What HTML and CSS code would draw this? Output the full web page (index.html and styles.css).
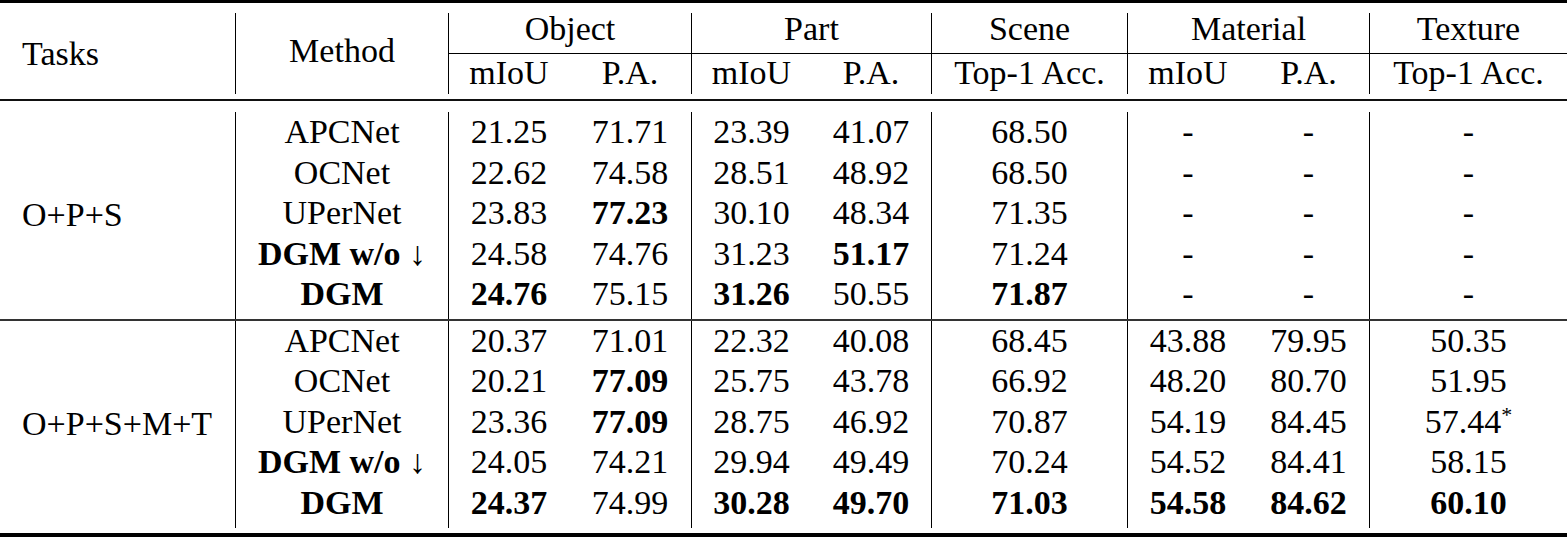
FILE: index.html
```html
<!DOCTYPE html>
<html>
<head>
<meta charset="utf-8">
<link rel="stylesheet" href="styles.css">
</head>
<body>
<table class="res">
<colgroup>
<col class="w-tasks"><col class="w-method">
<col class="w-o1"><col class="w-o2">
<col class="w-p1"><col class="w-p2">
<col class="w-scene">
<col class="w-m1"><col class="w-m2">
<col class="w-tex">
</colgroup>
<tbody>
<tr class="rule heavy"><td colspan="10"></td></tr>
<tr class="gap g-top"><td colspan="10"></td></tr>
<tr class="hd1">
<td rowspan="2" class="tasks hdspan">Tasks</td>
<td rowspan="2" class="vl hdspan">Method</td>
<td colspan="2" class="vl cm">Object</td>
<td colspan="2" class="vl cm">Part</td>
<td class="vl cm">Scene</td>
<td colspan="2" class="vl cm">Material</td>
<td class="vl cm">Texture</td>
</tr>
<tr class="hd2">
<td class="vl">mIoU</td><td>P.A.</td>
<td class="vl">mIoU</td><td>P.A.</td>
<td class="vl">Top-1 Acc.</td>
<td class="vl">mIoU</td><td>P.A.</td>
<td class="vl">Top-1 Acc.</td>
</tr>
<tr class="gap g-above"><td colspan="10"></td></tr>
<tr class="rule light"><td colspan="10"></td></tr>
<tr class="gap g-below"><td colspan="10"></td></tr>

<tr class="row first">
<td rowspan="5" class="tasks">O+P+S</td>
<td class="vl">APCNet</td>
<td class="vl">21.25</td><td>71.71</td>
<td class="vl">23.39</td><td>41.07</td>
<td class="vl">68.50</td>
<td class="vl">-</td><td>-</td>
<td class="vl">-</td>
</tr>
<tr class="row">
<td class="vl">OCNet</td>
<td class="vl">22.62</td><td>74.58</td>
<td class="vl">28.51</td><td>48.92</td>
<td class="vl">68.50</td>
<td class="vl">-</td><td>-</td>
<td class="vl">-</td>
</tr>
<tr class="row">
<td class="vl">UPerNet</td>
<td class="vl">23.83</td><td><b>77.23</b></td>
<td class="vl">30.10</td><td>48.34</td>
<td class="vl">71.35</td>
<td class="vl">-</td><td>-</td>
<td class="vl">-</td>
</tr>
<tr class="row">
<td class="vl"><b>DGM w/o</b> <span class="arrow">↓</span></td>
<td class="vl">24.58</td><td>74.76</td>
<td class="vl">31.23</td><td><b>51.17</b></td>
<td class="vl">71.24</td>
<td class="vl">-</td><td>-</td>
<td class="vl">-</td>
</tr>
<tr class="row last">
<td class="vl"><b>DGM</b></td>
<td class="vl"><b>24.76</b></td><td>75.15</td>
<td class="vl"><b>31.26</b></td><td>50.55</td>
<td class="vl"><b>71.87</b></td>
<td class="vl">-</td><td>-</td>
<td class="vl">-</td>
</tr>

<tr class="rule mid"><td colspan="10"></td></tr>

<tr class="row first">
<td rowspan="5" class="tasks">O+P+S+M+T</td>
<td class="vl">APCNet</td>
<td class="vl">20.37</td><td>71.01</td>
<td class="vl">22.32</td><td>40.08</td>
<td class="vl">68.45</td>
<td class="vl">43.88</td><td>79.95</td>
<td class="vl">50.35</td>
</tr>
<tr class="row">
<td class="vl">OCNet</td>
<td class="vl">20.21</td><td><b>77.09</b></td>
<td class="vl">25.75</td><td>43.78</td>
<td class="vl">66.92</td>
<td class="vl">48.20</td><td>80.70</td>
<td class="vl">51.95</td>
</tr>
<tr class="row">
<td class="vl">UPerNet</td>
<td class="vl">23.36</td><td><b>77.09</b></td>
<td class="vl">28.75</td><td>46.92</td>
<td class="vl">70.87</td>
<td class="vl">54.19</td><td>84.45</td>
<td class="vl">57.44<sup class="star">*</sup></td>
</tr>
<tr class="row">
<td class="vl"><b>DGM w/o</b> <span class="arrow">↓</span></td>
<td class="vl">24.05</td><td>74.21</td>
<td class="vl">29.94</td><td>49.49</td>
<td class="vl">70.24</td>
<td class="vl">54.52</td><td>84.41</td>
<td class="vl">58.15</td>
</tr>
<tr class="row last2">
<td class="vl"><b>DGM</b></td>
<td class="vl"><b>24.37</b></td><td>74.99</td>
<td class="vl"><b>30.28</b></td><td><b>49.70</b></td>
<td class="vl"><b>71.03</b></td>
<td class="vl"><b>54.58</b></td><td><b>84.62</b></td>
<td class="vl"><b>60.10</b></td>
</tr>
<tr class="gap g-above"><td colspan="10"></td></tr>
<tr class="rule heavy bottom"><td colspan="10"></td></tr>
</tbody>
</table>
</body>
</html>
```

FILE: styles.css
```css
html, body {
  margin: 0;
  padding: 0;
  background: #fff;
  font-family: "Liberation Serif", serif;
}

.res {
  width: 1567px;
  table-layout: fixed;
  border-collapse: separate;
  border-spacing: 0;
  font-family: "Liberation Serif", serif;
  font-size: 34px;
  color: #000;
}

.w-tasks { width: 235px; }
.w-method { width: 213px; }
.w-o1 { width: 121px; }
.w-o2 { width: 122px; }
.w-p1 { width: 120px; }
.w-p2 { width: 120px; }
.w-scene { width: 196px; }
.w-m1 { width: 121px; }
.w-m2 { width: 121px; }
.w-tex { width: 198px; }

.res td {
  padding: 0;
  text-align: center;
  vertical-align: middle;
  white-space: nowrap;
}

.res td.vl {
  border-left: 1px solid #000;
}

.rule td,
.gap td {
  font-size: 0;
  line-height: 0;
  padding: 0;
}

.rule.heavy td { height: 3px; background: #000; }
.rule.heavy.bottom td { height: 4px; }
.rule.light td { height: 2px; background: #111; }
.rule.mid td { height: 2px; background: #333; }

.gap.g-top td { height: 10px; }
.gap.g-above td { height: 5px; }
.gap.g-below td { height: 11px; }

.hd1 td {
  line-height: 32px;
  padding-bottom: 8px;
}

.hd1 td.cm {
  border-bottom: 1px solid #000;
}

.hd1 td.hdspan {
  line-height: 40px;
  padding-bottom: 6px;
}

.hd2 td {
  line-height: 37px;
  padding-bottom: 3px;
}

.res td.tasks {
  text-align: left;
  padding-left: 22px;
}

.row td {
  line-height: 40.5px;
}

.row.last td {
  padding-bottom: 4px;
}

.row.last2 td {
  padding-bottom: 5px;
}

.res td.tasks {
  padding-top: 0;
  padding-bottom: 0;
}

.arrow {
  font-weight: normal;
}

.star {
  font-size: 22px;
  line-height: 0;
  vertical-align: 11px;
}
```
